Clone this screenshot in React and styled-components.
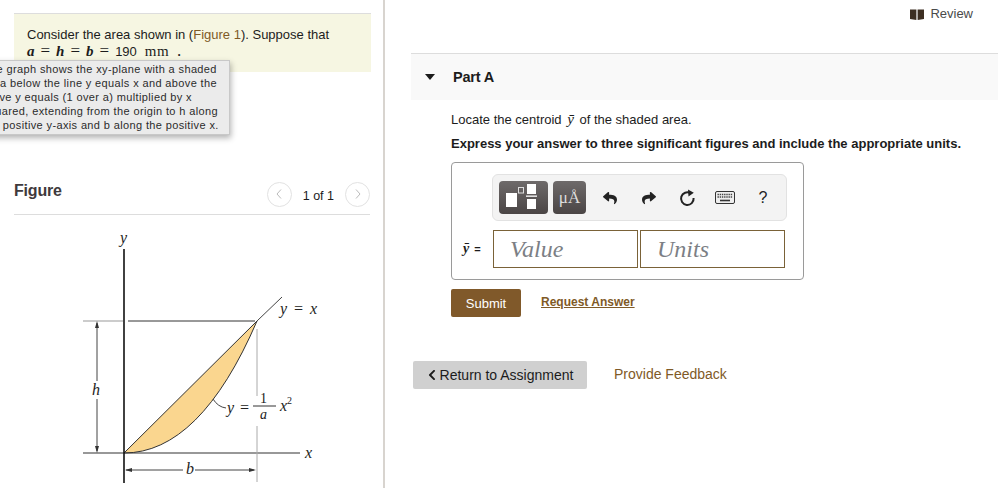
import { createGlobalStyle, styled } from "styled-components";
import { FaChevronLeft, FaReply, FaShare } from "react-icons/fa";

const GlobalStyle = createGlobalStyle`
  html, body {
    margin: 0;
    padding: 0;
    background: #fff;
    overflow: hidden;
  }
  body {
    font-family: "Liberation Sans", Arial, sans-serif;
    color: #1c1c1c;
  }
`;

const Page = styled.div`
  display: grid;
  grid-template-columns: 385px 1fr;
  width: 998px;
  height: 488px;
  overflow: hidden;
`;

const LeftPane = styled.section`
  position: relative;
  border-right: 2px solid #d8d4cf;
  padding: 13px 13px 0 14px;
  box-sizing: border-box;
  height: 488px;
`;

const Statement = styled.div`
  height: 59px;
  box-sizing: border-box;
  margin-right: -1px;
  background: #f6f6e2;
  border-top: 1px solid #ddd;
  padding: 13px 13px 0;
  font-size: 13px;
  line-height: 16px;
  a {
    color: #7f5a27;
  }
`;

const Math = styled.div`
  display: flex;
  align-items: baseline;
  gap: 6px;
  font-family: "Liberation Serif", serif;
  font-size: 17px;
  line-height: 15px;
  i {
    font-weight: bold;
    font-size: 15px;
  }
  span.num {
    font-family: "Liberation Sans", Arial, sans-serif;
    font-size: 13px;
  }
  span.mm {
    font-size: 15px;
    letter-spacing: 0.4px;
    margin: 0 2px;
  }
`;

const Tooltip = styled.div`
  position: absolute;
  left: -22px;
  top: 60px;
  width: 252px;
  height: 75px;
  box-sizing: border-box;
  padding: 1px 0 0 4px;
  background: #ebebeb;
  border: 1px solid #c8c8c8;
  box-shadow: 1px 3px 6px rgba(0, 0, 0, 0.3);
  font-size: 11px;
  line-height: 14px;
  letter-spacing: 0.37px;
  color: #2b2b2b;
  white-space: nowrap;
`;

const FigureBar = styled.div`
  display: flex;
  align-items: center;
  justify-content: space-between;
  margin-top: 108px;
  height: 35px;
  box-sizing: border-box;
  border-bottom: 1px solid #ddd;
  padding-bottom: 6px;
`;

const FigureTitle = styled.h2`
  margin: 0;
  font-size: 16px;
  font-weight: bold;
  letter-spacing: -0.2px;
  color: #3f3a3c;
  position: relative;
  top: -3px;
`;

const Pager = styled.div`
  display: flex;
  align-items: center;
  gap: 11px;
  font-size: 12.5px;
`;

const PagerLabel = styled.span`
  padding-top: 3px;
`;

const PagerButton = styled.span`
  width: 25px;
  height: 25px;
  box-sizing: border-box;
  border: 1px solid #e2e2e2;
  border-radius: 50%;
  display: flex;
  align-items: center;
  justify-content: center;
  svg {
    width: 8px;
    height: 12px;
  }
`;

const FigureImage = styled.svg`
  display: block;
  margin: 16px 0 0 64px;
`;

const RightPane = styled.section`
  display: flex;
  flex-direction: column;
`;

const ReviewRow = styled.div`
  height: 53px;
  box-sizing: border-box;
  display: flex;
  justify-content: flex-end;
  gap: 6px;
  padding: 7px 25px 0 0;
  font-size: 13px;
  line-height: 14px;
  color: #4a4a4a;
  svg {
    margin-top: 2px;
  }
`;

const PartHeader = styled.div`
  margin-left: 26px;
  height: 47px;
  box-sizing: border-box;
  background: #f9f9f9;
  border-top: 1px solid #ddd;
  display: flex;
  align-items: center;
  gap: 18px;
  padding-left: 14px;
  font-size: 14.5px;
  font-weight: bold;
  letter-spacing: -0.2px;
  &::before {
    content: "";
    border-left: 5px solid transparent;
    border-right: 5px solid transparent;
    border-top: 6px solid #1c1c1c;
  }
`;

const PartBody = styled.div`
  padding-left: 66px;
  font-size: 13px;
`;

const Prompt = styled.p`
  margin: 11px 0 0;
  line-height: 16px;
  height: 16px;
  i {
    font-family: "Liberation Serif", serif;
    font-size: 15px;
    margin: 0 2px;
  }
`;

const Instruction = styled(Prompt)`
  margin-top: 9px;
  font-weight: bold;
`;

const AnswerBox = styled.div`
  margin-top: 10px;
  width: 353px;
  height: 118px;
  box-sizing: border-box;
  border: 1px solid #9a9a9a;
  border-radius: 4px;
  padding: 11px 0 0 40px;
`;

const Toolbar = styled.div`
  width: 295px;
  height: 47px;
  box-sizing: border-box;
  background: #f3f3f3;
  border: 1px solid #e2e2e2;
  border-radius: 6px;
  display: flex;
  align-items: center;
  padding-left: 6px;
`;

const ToolButton = styled.button`
  width: ${(p) => p.$width}px;
  height: 33px;
  margin-right: 5px;
  padding: 0;
  border: 0;
  border-radius: 4px;
  background: linear-gradient(#6e6a6a, #4a4545);
  color: #ddd;
  display: flex;
  align-items: center;
  justify-content: center;
  font-family: "Liberation Serif", serif;
  font-size: 17px;
`;

const ToolIcon = styled.span`
  width: ${(p) => p.$width}px;
  display: flex;
  justify-content: center;
  align-items: center;
  color: #222;
  font-size: ${(p) => p.$size || 14}px;
`;

const AnswerRow = styled.div`
  display: flex;
  align-items: center;
  margin: 9px 0 0 -29px;
`;

const AnswerLabel = styled.span`
  width: 30px;
  display: flex;
  align-items: center;
  gap: 5px;
  font-size: 11px;
  font-weight: bold;
  white-space: nowrap;
  i {
    font-family: "Liberation Serif", serif;
    font-size: 14px;
  }
`;

const AnswerField = styled.div`
  width: 145px;
  height: 38px;
  box-sizing: border-box;
  border: 1px solid #7a6238;
  margin-right: 2px;
  padding-left: 16px;
  font-family: "Liberation Serif", serif;
  font-style: italic;
  font-size: 24px;
  line-height: 36px;
  color: #7c7f85;
  background: #fff;
`;

const Actions = styled.div`
  display: flex;
  align-items: center;
  gap: 20px;
  margin-top: 9px;
`;

const Submit = styled.button`
  width: 70px;
  height: 28px;
  padding: 0;
  border: 0;
  border-radius: 2px;
  background: #80592a;
  color: #fff;
  font: 13px "Liberation Sans", Arial, sans-serif;
`;

const RequestLink = styled.a`
  font-size: 12px;
  font-weight: bold;
  color: #7f5a27;
  text-decoration: underline;
  position: relative;
  top: -1px;
`;

const BottomRow = styled.div`
  display: flex;
  align-items: center;
  gap: 27px;
  margin: 44px 0 0 28px;
`;

const ReturnButton = styled.button`
  width: 174px;
  height: 28px;
  padding: 0;
  border: 0;
  border-radius: 2px;
  background: #d0d0d0;
  color: #1c1c1c;
  font: 14px "Liberation Sans", Arial, sans-serif;
  display: flex;
  align-items: center;
  justify-content: center;
  gap: 3px;
  svg {
    width: 10px;
    height: 12px;
  }
`;

const FeedbackLink = styled.a`
  font-size: 14px;
  color: #7f5a27;
  position: relative;
  top: -1px;
`;

function BookIcon() {
  return (
    <svg width="14" height="11" viewBox="0 0 14 11" fill="#3d2f22">
      <path d="M0 0.5 L6.4 0.5 L6.4 11 L0 10 Z" />
      <path d="M7.6 0.5 L14 0.5 L14 10 L7.6 11 Z" />
    </svg>
  );
}

function TemplateIcon() {
  return (
    <svg width="35" height="27" viewBox="0 0 35 27">
      <rect x="0" y="9" width="11" height="14" fill="#fff" />
      <rect x="12.500" y="3.500" width="5" height="5.500" fill="none" stroke="#ddd" />
      <rect x="21" y="0" width="9" height="10" fill="#fff" />
      <rect x="20" y="11.500" width="11" height="1.300" fill="#fff" />
      <rect x="21" y="15" width="9" height="10" fill="#fff" />
    </svg>
  );
}

function ResetIcon() {
  return (
    <svg width="17" height="18" viewBox="0 0 17 18" fill="none">
      <path d="M11.500 4.200 A6.300 6.300 0 1 0 14.600 9" stroke="#222" strokeWidth="2" />
      <path d="M9 0.500 L14.800 3.800 L9.500 7.500 Z" fill="#222" />
    </svg>
  );
}

function KeyboardIcon() {
  return (
    <svg width="20" height="13" viewBox="0 0 20 13">
      <rect x="0.500" y="0.500" width="19" height="12" rx="1.500" fill="#eee" stroke="#333" />
      <path d="M2.500 3.500 H17.500 M2.500 6 H17.500" stroke="#444" strokeWidth="1.400" strokeDasharray="1.400 0.800" />
      <path d="M5 9.500 H15" stroke="#333" strokeWidth="1.600" />
    </svg>
  );
}

function AreaFigure() {
  const label = { fontFamily: "Liberation Serif, serif", fontStyle: "italic", fontSize: 16, fill: "#222" };
  return (
    <FigureImage width="250" height="258" viewBox="78 230 250 258">
      <path d="M124 452 L257 320 Q 200 452 124 452 Z" fill="#fad68f" stroke="#333" strokeWidth="1" />
      <path d="M257 320 L282 296" stroke="#444" strokeWidth="1" />
      <path d="M83 320 H123" stroke="#999" strokeWidth="1" />
      <path d="M128 320 H255" stroke="#333" strokeWidth="1" />
      <path d="M83 452 H300" stroke="#333" strokeWidth="1.200" />
      <path d="M124 248 V482" stroke="#111" strokeWidth="1.600" />
      <path d="M257 328 V395 M257 425 V481" stroke="#aaa" strokeWidth="1" />
      <path d="M97 322 V380 M97 398 V450" stroke="#444" strokeWidth="1" />
      <path d="M97 320 L95 327 H99 Z M97 452 L95 445 H99 Z" fill="#333" />
      <path d="M126 469 H183 M195 469 H254" stroke="#444" strokeWidth="1" />
      <path d="M125 469 L132 467 V471 Z M256 469 L249 467 V471 Z" fill="#333" />
      <path d="M213 398 Q 218 406 226 407" fill="none" stroke="#444" strokeWidth="1" />
      <path d="M253 405 H276" stroke="#333" strokeWidth="1" />
      <text x="120" y="242" {...label}>y</text>
      <text x="280" y="313" {...label} wordSpacing="2">y = x</text>
      <text x="92" y="394" {...label}>h</text>
      <text x="186" y="473" {...label}>b</text>
      <text x="305" y="457" {...label}>x</text>
      <text x="227" y="412" {...label} wordSpacing="1">y =</text>
      <text x="260" y="402" {...label} fontStyle="normal" fontSize="14">1</text>
      <text x="260" y="418" {...label} fontSize="14">a</text>
      <text x="280" y="410" {...label}>x</text>
      <text x="287" y="403" {...label} fontStyle="normal" fontSize="10">2</text>
    </FigureImage>
  );
}

export default function App() {
  return (
    <Page>
      <GlobalStyle />
      <LeftPane>
        <Statement>
          Consider the area shown in (<a>Figure 1</a>). Suppose that
          <Math>
            <i>a</i><span>=</span><i>h</i><span>=</span><i>b</i><span>=</span>
            <span className="num">190</span>
            <span className="mm">mm</span>
            <span>.</span>
          </Math>
        </Statement>
        <Tooltip>
          <div>The graph shows the xy-plane with a shaded</div>
          <div>area below the line y equals x and above the</div>
          <div>curve y equals (1 over a) multiplied by x</div>
          <div>squared, extending from the origin to h along</div>
          <div>the positive y-axis and b along the positive x.</div>
        </Tooltip>
        <FigureBar>
          <FigureTitle>Figure</FigureTitle>
          <Pager>
            <PagerButton>
              <svg viewBox="0 0 8 12" fill="none"><path d="M6 1.500 L2 6 L6 10.500" stroke="#bbb" /></svg>
            </PagerButton>
            <PagerLabel>1 of 1</PagerLabel>
            <PagerButton>
              <svg viewBox="0 0 8 12" fill="none"><path d="M2 1.500 L6 6 L2 10.500" stroke="#bbb" /></svg>
            </PagerButton>
          </Pager>
        </FigureBar>
        <AreaFigure />
      </LeftPane>
      <RightPane>
        <ReviewRow>
          <BookIcon />
          Review
        </ReviewRow>
        <PartHeader>Part A</PartHeader>
        <PartBody>
          <Prompt>
            Locate the centroid <i>ȳ</i> of the shaded area.
          </Prompt>
          <Instruction>Express your answer to three significant figures and include the appropriate units.</Instruction>
          <AnswerBox>
            <Toolbar>
              <ToolButton $width={49}><TemplateIcon /></ToolButton>
              <ToolButton $width={33}>μÅ</ToolButton>
              <ToolIcon $width={38}><FaReply /></ToolIcon>
              <ToolIcon $width={40}><FaShare /></ToolIcon>
              <ToolIcon $width={36}><ResetIcon /></ToolIcon>
              <ToolIcon $width={40}><KeyboardIcon /></ToolIcon>
              <ToolIcon $width={36} $size={16}>?</ToolIcon>
            </Toolbar>
            <AnswerRow>
              <AnswerLabel><i>ȳ</i><span>=</span></AnswerLabel>
              <AnswerField>Value</AnswerField>
              <AnswerField>Units</AnswerField>
            </AnswerRow>
          </AnswerBox>
          <Actions>
            <Submit>Submit</Submit>
            <RequestLink>Request Answer</RequestLink>
          </Actions>
        </PartBody>
        <BottomRow>
          <ReturnButton><FaChevronLeft />Return to Assignment</ReturnButton>
          <FeedbackLink>Provide Feedback</FeedbackLink>
        </BottomRow>
      </RightPane>
    </Page>
  );
}
